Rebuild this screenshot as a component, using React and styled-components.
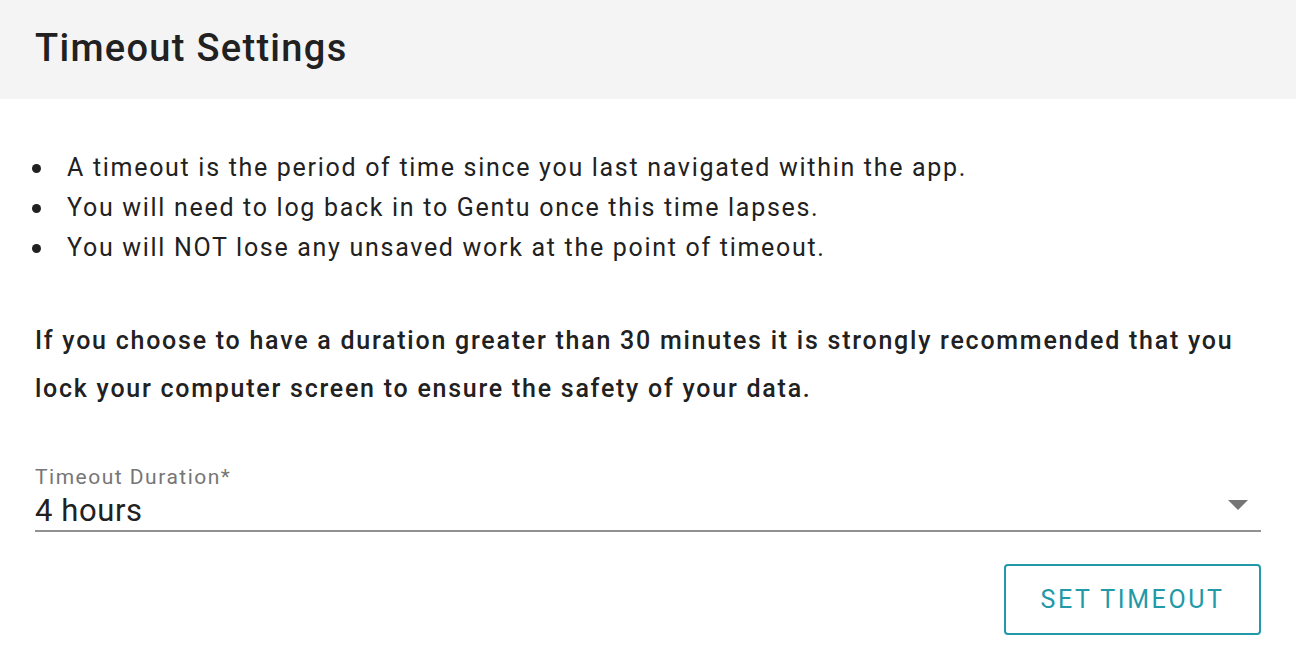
import React from 'react'
import styled, { createGlobalStyle } from 'styled-components'

const GlobalStyle = createGlobalStyle`
  html, body {
    margin: 0;
    padding: 0;
    background: #ffffff;
  }
  body {
    font-family: Roboto, 'Liberation Sans', sans-serif;
    color: #212121;
  }
`

const Header = styled.header`
  height: 99px;
  background: #f4f4f4;
  display: flex;
  align-items: center;
  padding: 0 35px;
  box-sizing: border-box;
`

const Title = styled.h1`
  margin: 0 0 4px;
  font-size: 38px;
  font-weight: 500;
  color: #212121;
  letter-spacing: 1.3px;
`

const Body = styled.section`
  padding: 49px 35px 0;
`

const List = styled.ul`
  list-style: none;
  margin: 0;
  padding: 0;
`

const Item = styled.li`
  display: flex;
  align-items: center;
  font-size: 25px;
  line-height: 40px;
  letter-spacing: 1.7px;
  color: #212121;
  &::before {
    content: '';
    width: 9px;
    height: 9px;
    border-radius: 50%;
    background: #212121;
    margin: 0 26px 0 -3px;
    flex-shrink: 0;
  }
`

const Notice = styled.p`
  margin: 49px 0 0;
  font-size: 25px;
  font-weight: 500;
  line-height: 48px;
  letter-spacing: 1.75px;
  color: #212121;
`

const Field = styled.div`
  margin-top: 52px;
  position: relative;
  border-bottom: 2px solid #919191;
  padding-bottom: 1px;
`

const Label = styled.label`
  display: block;
  font-size: 21px;
  line-height: 24px;
  letter-spacing: 1.5px;
  color: #767676;
`

const Value = styled.div`
  margin-top: 4px;
  font-size: 31px;
  line-height: 36px;
  letter-spacing: 0.6px;
  color: #212121;
`

const Caret = styled.span`
  position: absolute;
  right: 13px;
  bottom: 20px;
  width: 0;
  height: 0;
  border-left: 10px solid transparent;
  border-right: 10px solid transparent;
  border-top: 10px solid #757575;
`

const Actions = styled.div`
  display: flex;
  justify-content: flex-end;
  margin-top: 32px;
`

const Button = styled.button`
  width: 257px;
  height: 71px;
  background: #ffffff;
  border: 2px solid #2199a8;
  border-radius: 4px;
  color: #2199a8;
  font-family: Roboto, 'Liberation Sans', sans-serif;
  font-size: 25px;
  font-weight: 400;
  letter-spacing: 2.6px;
  text-transform: uppercase;
  cursor: pointer;
`

const App = () => {
  return (
    <>
      <GlobalStyle />
      <Header>
        <Title>Timeout Settings</Title>
      </Header>
      <Body>
        <List>
          <Item>A timeout is the period of time since you last navigated within the app.</Item>
          <Item>You will need to log back in to Gentu once this time lapses.</Item>
          <Item>You will NOT lose any unsaved work at the point of timeout.</Item>
        </List>
        <Notice>
          If you choose to have a duration greater than 30 minutes it is strongly recommended that you
          lock your computer screen to ensure the safety of your data.
        </Notice>
        <Field>
          <Label>Timeout Duration*</Label>
          <Value>4 hours</Value>
          <Caret />
        </Field>
        <Actions>
          <Button>Set Timeout</Button>
        </Actions>
      </Body>
    </>
  )
}

export default App
